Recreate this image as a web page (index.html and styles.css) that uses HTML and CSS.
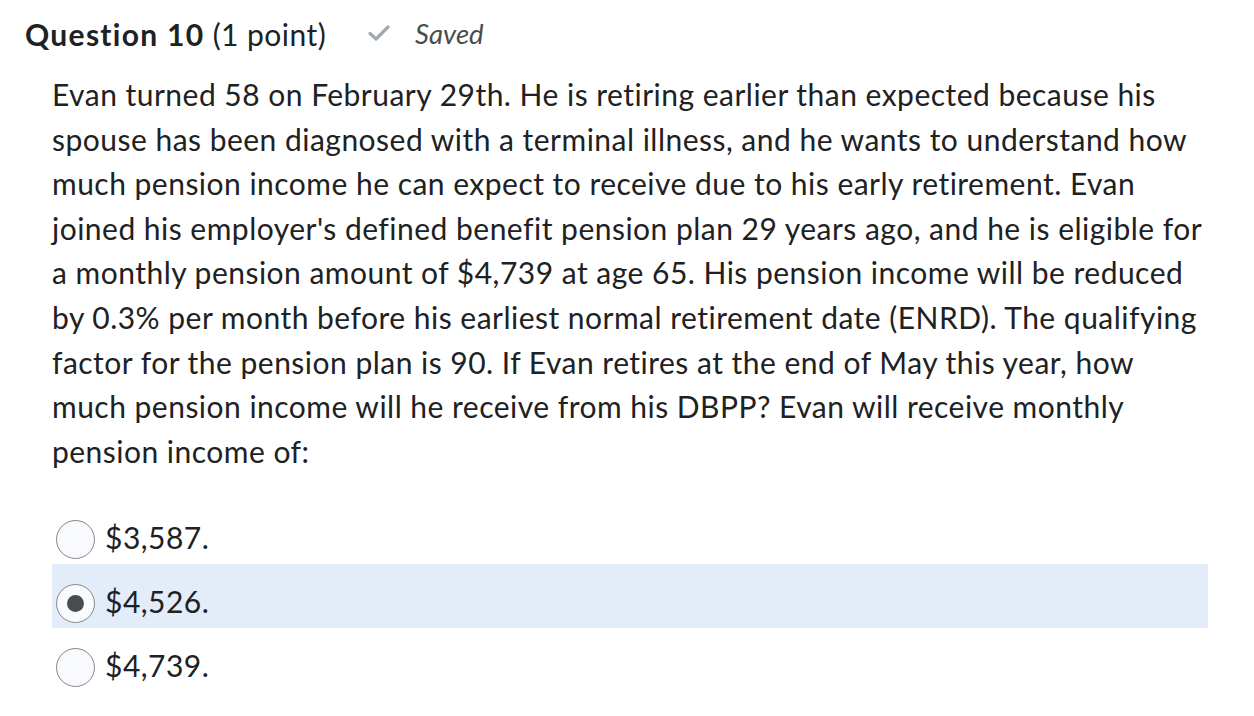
FILE: index.html
```html
<!DOCTYPE html>
<html>
<head>
<meta charset="utf-8">
<link rel="stylesheet" href="styles.css">
</head>
<body>
<div class="question">
  <div class="q-header">
    <h2 class="q-title"><strong>Question 10</strong> (1 point)</h2>
    <span class="saved">
      <svg class="check" width="22" height="18" viewBox="0 0 22 18"><path d="M2 9.5 L8 15 L20 3" fill="none" stroke="#a3aaaf" stroke-width="3.2" stroke-linecap="round" stroke-linejoin="round"/></svg>
      <em>Saved</em>
    </span>
  </div>
  <p class="q-text">Evan turned 58 on February 29th. He is retiring earlier than expected because his spouse has been diagnosed with a terminal illness, and he wants to understand how much pension income he can expect to receive due to his early retirement. Evan joined his employer's defined benefit pension plan 29 years ago, and he is eligible for a monthly pension amount of $4,739 at age 65. His pension income will be reduced by 0.3% per month before his earliest normal retirement date (ENRD). The qualifying factor for the pension plan is 90. If Evan retires at the end of May this year, how much pension income will he receive from his DBPP? Evan will receive monthly pension income of:</p>
  <div class="options">
    <label class="option"><span class="radio"></span><span class="opt-text">$3,587.</span></label>
    <label class="option selected"><span class="radio checked"></span><span class="opt-text">$4,526.</span></label>
    <label class="option"><span class="radio"></span><span class="opt-text">$4,739.</span></label>
  </div>
</div>
</body>
</html>
```

FILE: styles.css
```css
html, body {
  margin: 0;
  padding: 0;
  background: #ffffff;
}
body {
  font-family: Lato, "Noto Sans", sans-serif;
  color: #202122;
  font-variant-ligatures: none;
}
.question {
  width: 1183px;
  padding: 0 0 0 25px;
}
.q-header {
  display: flex;
  align-items: center;
  gap: 42px;
  height: 68px;
}
.q-title {
  margin: 0;
  font-size: 30px;
  font-weight: 400;
  line-height: 1;
  letter-spacing: 0.45px;
}
.q-title strong {
  font-weight: 700;
  letter-spacing: 1.3px;
}
.saved {
  display: flex;
  align-items: center;
  gap: 25px;
  font-size: 27.5px;
  color: #494c4e;
  margin-top: -2px;
}
.saved em {
  font-style: italic;
}
.q-text {
  margin: 4px 0 0 27px;
  font-size: 30px;
  line-height: 44.6px;
  letter-spacing: 0.48px;
  width: 1156px;
}
.options {
  margin-top: 27px;
  margin-left: 27px;
  width: 1156px;
}
.option {
  display: flex;
  align-items: center;
  height: 64px;
  padding: 0 4px;
  box-sizing: border-box;
  font-size: 30px;
  letter-spacing: 0.48px;
}
.option.selected {
  background: #e3edf9;
}
.radio {
  width: 39px;
  height: 39px;
  border: 1px solid #868686;
  border-radius: 50%;
  background: #f9fafe;
  box-sizing: border-box;
  display: flex;
  align-items: center;
  justify-content: center;
  margin-top: 14px;
  flex: none;
}
.radio.checked::after {
  content: "";
  width: 17px;
  height: 17px;
  border-radius: 50%;
  background: #494c4e;
}
.opt-text {
  margin-left: 10px;
  margin-top: 10px;
}
```
